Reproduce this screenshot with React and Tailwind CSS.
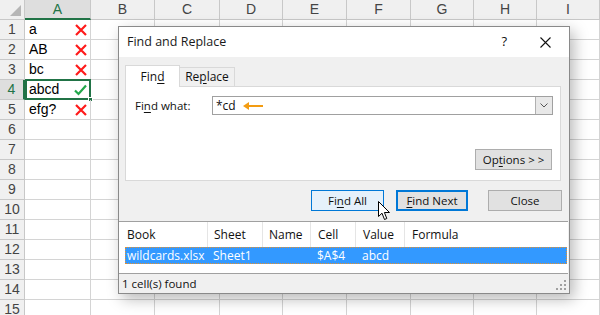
import React from 'react';

const cols = ['A', 'B', 'C', 'D', 'E', 'F', 'G', 'H', 'I'];
const cells = ['a', 'AB', 'bc', 'abcd', 'efg?'];

const RedX = () => (
  <svg width="12" height="12" viewBox="0 0 12 12">
    <path d="M1 1 L11 11 M11 1 L1 11" stroke="#ff1a1a" strokeWidth="2.2" />
  </svg>
);

const Check = () => (
  <svg width="13" height="12" viewBox="0 0 13 12">
    <path d="M1 6.5 L4.5 10 L12 1.5" stroke="#22a84a" strokeWidth="2.2" fill="none" />
  </svg>
);

const U = ({ children }) => <span className="underline underline-offset-2">{children}</span>;

const Sheet = () => {
  const rows = Array.from({ length: 15 }, (_, i) => i + 1);
  return (
    <div className="grid grid-cols-[25px_66px_64px_65px_63px_64px_64px_63px_63px_63px] font-['Liberation_Sans',sans-serif] text-[14px] text-black">
      <div className="h-[20px] bg-[#f0f0f0] border-r border-b border-[#c8c8c8] flex items-end justify-end p-[3px]">
        <svg width="11" height="11" viewBox="0 0 11 11">
          <path d="M11 0 L11 11 L0 11 Z" fill="#b6b6b6" />
        </svg>
      </div>
      {cols.map((c) => (
        <div
          key={c}
          className={
            c === 'A'
              ? 'h-[20px] bg-[#dedede] border-r border-[#c8c8c8] border-b-2 border-b-[#217346] flex items-center justify-center text-[#217346] text-[14px]'
              : 'h-[20px] bg-[#f0f0f0] border-r border-b border-[#c8c8c8] flex items-center justify-center text-[#444] text-[14px]'
          }
        >
          {c}
        </div>
      ))}
      {rows.map((r) => (
        <React.Fragment key={r}>
          <div
            className={
              r === 4
                ? 'h-[20px] bg-[#dedede] border-r-2 border-r-[#217346] border-b border-[#c8c8c8] flex items-center justify-center text-[#217346] text-[14px]'
                : 'h-[20px] bg-[#f0f0f0] border-r border-b border-[#c8c8c8] flex items-center justify-center text-[#444] text-[14px]'
            }
          >
            {r}
          </div>
          <div className="relative h-[20px] border-r border-b border-[#d4d4d4] flex items-center justify-between pl-[4px] pr-[3px]">
            <span>{cells[r - 1] || ''}</span>
            {r <= 5 && (r === 4 ? <Check /> : <RedX />)}
            {r === 4 && (
              <>
                <div className="absolute left-0 top-[-1px] right-[-1px] bottom-[-1px] border-2 border-[#217346]" />
                <div className="absolute right-[-3px] bottom-[-3px] w-[5px] h-[5px] bg-[#217346] border border-white" />
              </>
            )}
          </div>
          {cols.slice(1).map((c) => (
            <div key={c} className="h-[20px] border-r border-b border-[#d4d4d4]" />
          ))}
        </React.Fragment>
      ))}
    </div>
  );
};

const Btn = ({ className, children }) => (
  <div className={`h-[21px] flex items-center justify-center ${className}`}>{children}</div>
);

const Dialog = () => (
  <div className="absolute left-[118px] top-[26px] w-[452px] h-[268px] border border-[#8a8a8a] bg-[#f0f0f0] flex flex-col shadow-[4px_5px_14px_rgba(0,0,0,0.28)] font-['Open_Sans',sans-serif] text-[11.5px] text-[#111]">
    <div className="h-[30px] bg-white flex items-center pl-[8px] pr-[18px] shrink-0">
      <span className="text-[12.5px] text-[#1a1a1a]">Find and Replace</span>
      <span className="ml-auto mr-[33px] text-[13px]">?</span>
      <svg width="11" height="11" viewBox="0 0 11 11">
        <path d="M0.5 0.5 L10.5 10.5 M10.5 0.5 L0.5 10.5" stroke="#111" strokeWidth="1.1" />
      </svg>
    </div>

    <div className="pl-[6px] pt-[7px] flex items-end h-[29px] shrink-0">
      <div className="relative z-10 w-[55px] h-[22px] -mb-px bg-white border border-b-0 border-[#d9d9d9] flex items-center justify-center text-[12px]">
        <span>Fin<U>d</U></span>
      </div>
      <div className="w-[55px] h-[19px] border border-l-0 border-b-0 border-[#d9d9d9] flex items-center justify-center text-[12px]">
        <span>Re<U>p</U>lace</span>
      </div>
    </div>

    <div className="ml-[6px] w-[436px] h-[95px] shrink-0 bg-white border border-[#d9d9d9] flex flex-col">
      <div className="flex items-center pt-[9px] pl-[9px]">
        <span className="w-[77px]">Fi<U>n</U>d what:</span>
        <div className="w-[341px] h-[19px] border border-[#a0a0a0] flex items-center">
          <span className="pl-[3px] text-[12px]">*cd</span>
          <svg className="ml-[7px]" width="20" height="8" viewBox="0 0 20 8">
            <path d="M0 4 L6 0 L6 8 Z" fill="#f39c12" />
            <rect x="5" y="3" width="15" height="2" fill="#f39c12" />
          </svg>
          <div className="ml-auto w-[17px] h-full bg-[#e8e8e8] border-l border-[#b0b0b0] flex items-center justify-center">
            <svg width="8" height="5" viewBox="0 0 8 5">
              <path d="M0.5 0.5 L4 4 L7.5 0.5" stroke="#555" strokeWidth="1" fill="none" />
            </svg>
          </div>
        </div>
      </div>
      <Btn className="mt-auto self-end mr-[8px] mb-[10px] w-[77px] bg-[#e1e1e1] border border-[#adadad]">
        <span>Op<U>t</U>ions &gt; &gt;</span>
      </Btn>
    </div>

    <div className="flex justify-end pr-[7px] mt-[9px] shrink-0">
      <Btn className="w-[73px] bg-[#e5f1fb] border border-[#0078d7]">
        <span>Fi<U>n</U>d All</span>
      </Btn>
      <Btn className="ml-[12px] w-[72px] bg-[#e1e1e1] border-2 border-[#0078d7]">
        <span><U>F</U>ind Next</span>
      </Btn>
      <Btn className="ml-[20px] w-[74px] bg-[#e1e1e1] border border-[#adadad]">
        <span>Close</span>
      </Btn>
    </div>

    <div className="mt-[10px] mr-px h-[53px] shrink-0 bg-white border-t border-b border-[#a0a0a0] flex flex-col">
      <div className="h-[25px] flex text-[12px]">
        <div className="w-[88px] pl-[8px] flex items-center">Book</div>
        <div className="w-[55px] pl-[6px] flex items-center border-l border-[#e5e5e5]">Sheet</div>
        <div className="w-[48px] pl-[6px] flex items-center border-l border-[#e5e5e5]">Name</div>
        <div className="w-[45px] pl-[7px] flex items-center border-l border-[#e5e5e5]">Cell</div>
        <div className="w-[49px] pl-[7px] flex items-center border-l border-[#e5e5e5]">Value</div>
        <div className="flex-1 pl-[7px] flex items-center border-l border-[#e5e5e5]">Formula</div>
      </div>
      <div className="ml-[6px] mr-px h-[17px] bg-[#3399ff] border border-dotted border-[#e8902a] flex items-center text-white text-[12px]">
        <div className="w-[81px] pl-[1px]">wildcards.xlsx</div>
        <div className="w-[55px] pl-[6px]">Sheet1</div>
        <div className="w-[48px]" />
        <div className="w-[45px] pl-[7px]">$A$4</div>
        <div className="w-[49px] pl-[7px]">abcd</div>
      </div>
    </div>

    <div className="relative flex-1 flex items-center pl-[3px]">
      <span>1 cell(s) found</span>
      <svg className="absolute right-[3px] bottom-[3px]" width="10" height="10" viewBox="0 0 10 10">
        <g fill="#a0a0a0">
          <rect x="8" y="0" width="2" height="2" />
          <rect x="4" y="4" width="2" height="2" />
          <rect x="8" y="4" width="2" height="2" />
          <rect x="0" y="8" width="2" height="2" />
          <rect x="4" y="8" width="2" height="2" />
          <rect x="8" y="8" width="2" height="2" />
        </g>
      </svg>
    </div>
  </div>
);

const Cursor = () => (
  <svg className="absolute left-[378px] top-[201px]" width="13" height="20" viewBox="0 0 13 20">
    <path
      d="M0.5 0.5 L0.5 15.5 L4 12.2 L6.5 18.5 L8.8 17.5 L6.4 11.5 L11.5 11.5 Z"
      fill="white"
      stroke="black"
      strokeWidth="1"
      strokeLinejoin="round"
    />
  </svg>
);

export default function App() {
  return (
    <div className="relative w-[600px] h-[315px] overflow-hidden bg-white">
      <Sheet />
      <Dialog />
      <Cursor />
    </div>
  );
}
